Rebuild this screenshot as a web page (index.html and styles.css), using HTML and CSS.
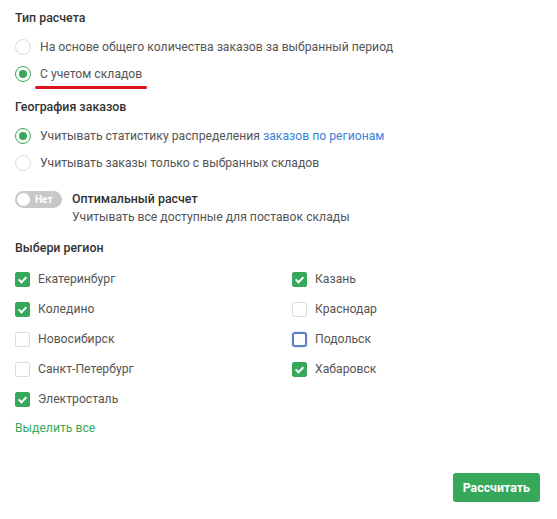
FILE: index.html
```html
<!DOCTYPE html>
<html lang="ru">
<head>
  <meta charset="UTF-8">
  <title>Расчет поставки</title>
  <link rel="stylesheet" href="styles.css">
</head>
<body>
  <div class="panel">
    <h3 class="title">Тип расчета</h3>
    <div class="radio-group">
      <label class="radio"><span class="dot"></span>На основе общего количества заказов за выбранный период</label>
      <label class="radio checked"><span class="dot"></span><span class="marked">С учетом складов</span></label>
    </div>

    <h3 class="title">География заказов</h3>
    <div class="radio-group">
      <label class="radio checked"><span class="dot"></span>Учитывать статистику распределения&nbsp;<a class="link" href="#">заказов по регионам</a></label>
      <label class="radio"><span class="dot"></span>Учитывать заказы только с выбранных складов</label>
    </div>

    <div class="switch-row">
      <span class="switch"><span class="knob"></span>Нет</span>
      <div class="switch-text">
        <div class="switch-title">Оптимальный расчет</div>
        <div class="switch-sub">Учитывать все доступные для поставок склады</div>
      </div>
    </div>

    <h3 class="title">Выбери регион</h3>
    <div class="regions">
      <label class="check on"><span class="box"></span>Екатеринбург</label>
      <label class="check on"><span class="box"></span>Казань</label>
      <label class="check on"><span class="box"></span>Коледино</label>
      <label class="check"><span class="box"></span>Краснодар</label>
      <label class="check"><span class="box"></span>Новосибирск</label>
      <label class="check focus"><span class="box"></span>Подольск</label>
      <label class="check"><span class="box"></span>Санкт-Петербург</label>
      <label class="check on"><span class="box"></span>Хабаровск</label>
      <label class="check on"><span class="box"></span>Электросталь</label>
    </div>
    <a class="select-all" href="#">Выделить все</a>

    <div class="actions">
      <button class="btn">Рассчитать</button>
    </div>
  </div>
</body>
</html>
```

FILE: styles.css
```css
body {
  margin: 0;
  background: #fff;
  font-family: Roboto, "Liberation Sans", Arial, sans-serif;
  font-size: 12.2px;
  color: #555;
}
.panel {
  width: 525px;
  padding: 9px 17px 0 15px;
}
.title {
  margin: 0;
  font-size: 12.4px;
  font-weight: 500;
  color: #333;
  line-height: 18px;
}
.radio-group {
  display: flex;
  flex-direction: column;
  gap: 9px;
  margin: 11px 0 15px;
}
.radio {
  display: flex;
  align-items: center;
  height: 18px;
  line-height: 18px;
}
.radio .dot {
  box-sizing: border-box;
  width: 16px;
  height: 16px;
  border: 1px solid #ddd;
  border-radius: 50%;
  margin-right: 9px;
  display: flex;
  align-items: center;
  justify-content: center;
  flex: none;
}
.radio.checked .dot {
  border: 1px solid #36a85a;
}
.radio.checked .dot::after {
  content: '';
  width: 8px;
  height: 8px;
  border-radius: 50%;
  background: #36a85a;
}
.marked {
  position: relative;
}
.marked::after {
  content: '';
  position: absolute;
  left: -5px;
  right: -5px;
  bottom: -6px;
  height: 3px;
  border-radius: 2px;
  background: #e0141e;
}
.link {
  color: #3b82dc;
  text-decoration: none;
}
.switch-row {
  display: flex;
  align-items: flex-start;
  margin: 18px 0 13px;
}
.switch {
  box-sizing: border-box;
  width: 47px;
  height: 17px;
  border-radius: 9px;
  background: #c8c8c8;
  color: #fff;
  font-size: 10px;
  font-weight: 700;
  display: flex;
  align-items: center;
  padding: 0 2px;
  gap: 5px;
  margin: 1px 10px 0 0;
  flex: none;
}
.switch .knob {
  width: 13px;
  height: 13px;
  border-radius: 50%;
  background: #fff;
}
.switch-title {
  font-size: 12.4px;
  font-weight: 500;
  color: #333;
  line-height: 18px;
}
.switch-sub {
  line-height: 18px;
}
.regions {
  display: grid;
  grid-template-columns: 277px 1fr;
  row-gap: 12px;
  margin-top: 13px;
}
.check {
  display: flex;
  align-items: center;
  height: 18px;
}
.check .box {
  box-sizing: border-box;
  width: 15px;
  height: 15px;
  border: 1px solid #ddd;
  border-radius: 2px;
  margin-right: 8px;
  flex: none;
  position: relative;
}
.check.on .box {
  background: #36a85a;
  border-color: #36a85a;
}
.check.on .box::after {
  content: '';
  position: absolute;
  left: 4px;
  top: 2px;
  width: 3px;
  height: 6px;
  border: solid #fff;
  border-width: 0 2px 2px 0;
  transform: rotate(45deg);
}
.check.focus .box {
  border: 2px solid #5b7fc4;
  border-radius: 3px;
  box-shadow: 0 0 2px rgba(91, 127, 196, 0.5);
}
.select-all {
  display: inline-block;
  margin-top: 13px;
  color: #36a85a;
  text-decoration: none;
}
.actions {
  display: flex;
  justify-content: flex-end;
  margin-top: 38px;
}
.btn {
  height: 29px;
  padding: 0 10px;
  border: none;
  border-radius: 3px;
  background: #36a85a;
  color: #fff;
  font-family: Roboto, "Liberation Sans", Arial, sans-serif;
  font-size: 12.4px;
  font-weight: 700;
}
```
